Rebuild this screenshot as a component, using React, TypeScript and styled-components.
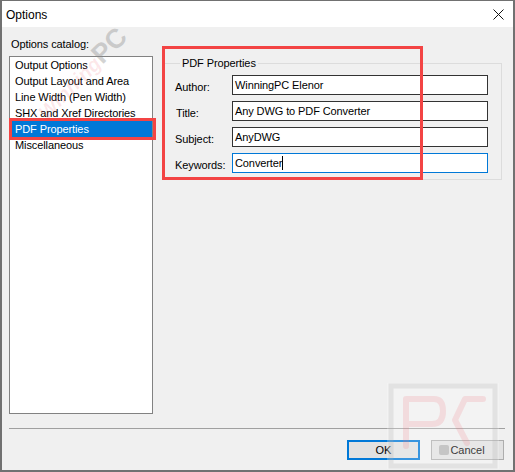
import React from "react";
import styled, { createGlobalStyle } from "styled-components";

const GlobalStyle = createGlobalStyle`
  html, body {
    margin: 0;
    padding: 0;
    background: #f0f0f0;
  }
  body {
    font-family: "Liberation Sans", Arial, sans-serif;
    font-size: 11px;
    letter-spacing: -0.1px;
    color: #000;
  }
`;

const Window = styled.div`
  position: relative;
  width: 515px;
  height: 472px;
  box-sizing: border-box;
  border: 2px solid #717171;
  border-top-width: 1px;
  display: flex;
  flex-direction: column;
  overflow: hidden;
  background: #f0f0f0;
`;

const TitleBar = styled.div`
  height: 26px;
  flex: none;
  background: #fff;
  display: flex;
  align-items: center;
  justify-content: space-between;
  padding: 0 9px 0 4px;
`;

const Title = styled.span`
  font-size: 12px;
  line-height: 16px;
  letter-spacing: 0;
  margin-top: 1px;
`;

const CloseIcon = () => (
  <svg width="11" height="11" viewBox="0 0 11 11">
    <path d="M0.5 0.5 L10.5 10.5 M10.5 0.5 L0.5 10.5" stroke="#111" strokeWidth="1" />
  </svg>
);

const Body = styled.div`
  flex: 1;
  display: flex;
  flex-direction: column;
  padding: 11px 8px 10px 7px;
  min-height: 0;
`;

const Main = styled.div`
  flex: 1;
  display: flex;
  min-height: 0;
`;

const Catalog = styled.div`
  width: 144px;
  display: flex;
  flex-direction: column;
`;

const CatalogLabel = styled.div`
  line-height: 13px;
  padding-left: 2px;
  margin-bottom: 5px;
`;

const List = styled.ul`
  flex: 1;
  margin: 0;
  padding: 0;
  list-style: none;
  background: #fff;
  border: 1px solid #828282;
`;

const Item = styled.li<{ $selected?: boolean }>`
  position: relative;
  height: 16px;
  line-height: 16px;
  padding-left: 5px;
  white-space: nowrap;
  background: ${(p) => (p.$selected ? "#0078d7" : "transparent")};
  color: ${(p) => (p.$selected ? "#fff" : "#000")};
`;

/* red markup frames drawn over the dialog */
const Marker = styled.div<{ $inset: string }>`
  position: absolute;
  inset: ${(p) => p.$inset};
  border: 3px solid #f34444;
  pointer-events: none;
`;

const Properties = styled.div`
  flex: 1;
  margin-left: 11px;
  margin-right: 3px;
  padding-top: 19px;
`;

const GroupWrap = styled.div`
  position: relative;
`;

const Group = styled.fieldset`
  margin: 0;
  padding: 5px 13px 6px 10px;
  border: 1px solid #dcdcdc;
  min-inline-size: 0;
  display: flex;
  flex-direction: column;
  gap: 6px;
`;

const Legend = styled.legend`
  margin-left: 5px;
  padding: 0 2px;
  line-height: 13px;
`;

const Row = styled.div`
  display: flex;
  align-items: center;
`;

const FieldLabel = styled.label<{ $shift?: number }>`
  width: 57px;
  flex: none;
  padding-top: 4px;
  padding-left: ${(p) => p.$shift ?? 0}px;
  box-sizing: border-box;
`;

const Field = styled.div<{ $focused?: boolean }>`
  flex: 1;
  height: 20px;
  box-sizing: border-box;
  border: 1px solid ${(p) => (p.$focused ? "#0078d7" : "#333")};
  background: #fff;
  padding-left: 2px;
  line-height: 18px;
  white-space: nowrap;
  display: flex;
  align-items: center;
`;

const Caret = styled.span`
  display: inline-block;
  width: 1px;
  height: 14px;
  background: #000;
`;

const Separator = styled.div`
  height: 1px;
  background: #a0a0a0;
  margin: 14px 0 11px 0;
  flex: none;
`;

const Buttons = styled.div`
  display: flex;
  justify-content: flex-end;
  gap: 11px;
  padding-right: 1px;
  flex: none;
`;

const Button = styled.button<{ $default?: boolean }>`
  width: 73px;
  height: 20px;
  box-sizing: border-box;
  font: inherit;
  font-size: 11px;
  color: #000;
  background: #e1e1e1;
  border: ${(p) => (p.$default ? "2px solid #0078d7" : "1px solid #adadad")};
  padding: 0;
  line-height: 16px;
`;

/* faint site watermarks layered over the dialog */
const CornerMark = styled.svg`
  position: absolute;
  left: 385px;
  top: 382px;
  pointer-events: none;
`;

const DiagonalMark = styled.div`
  position: absolute;
  left: 51px;
  top: 95px;
  transform: rotate(-45deg);
  transform-origin: 0 100%;
  font-family: "Liberation Sans", Arial, sans-serif;
  font-weight: bold;
  line-height: 26px;
  letter-spacing: 0;
  white-space: nowrap;
  pointer-events: none;
`;

const MarkRed = styled.span`
  font-size: 20px;
  color: rgba(235, 70, 80, 0.12);
  font-style: italic;
`;

const MarkGray = styled.span`
  font-size: 27px;
  color: rgba(140, 140, 140, 0.38);
`;

const catalog = [
  "Output Options",
  "Output Layout and Area",
  "Line Width (Pen Width)",
  "SHX and Xref Directories",
  "PDF Properties",
  "Miscellaneous",
];

const fields = [
  { label: "Author:", value: "WinningPC Elenor", shift: 0 },
  { label: "Title:", value: "Any DWG to PDF Converter", shift: 1 },
  { label: "Subject:", value: "AnyDWG", shift: 0 },
  { label: "Keywords:", value: "Converter", shift: 0, focused: true },
];

export default function App() {
  return (
    <>
      <GlobalStyle />
      <Window>
        <TitleBar>
          <Title>Options</Title>
          <CloseIcon />
        </TitleBar>
        <Body>
          <Main>
            <Catalog>
              <CatalogLabel>Options catalog:</CatalogLabel>
              <List>
                {catalog.map((name) => (
                  <Item key={name} $selected={name === "PDF Properties"}>
                    {name}
                    {name === "PDF Properties" && <Marker $inset="-3px -4px -3px -1px" />}
                  </Item>
                ))}
              </List>
            </Catalog>
            <Properties>
              <GroupWrap>
                <Group>
                  <Legend>PDF Properties</Legend>
                  {fields.map((f) => (
                    <Row key={f.label}>
                      <FieldLabel $shift={f.shift}>{f.label}</FieldLabel>
                      <Field $focused={f.focused}>
                        {f.value}
                        {f.focused && <Caret />}
                      </Field>
                    </Row>
                  ))}
                </Group>
                <Marker $inset="-11px 79px 0px -2px" />
              </GroupWrap>
            </Properties>
          </Main>
          <Separator />
          <Buttons>
            <Button $default>OK</Button>
            <Button>Cancel</Button>
          </Buttons>
        </Body>

        <DiagonalMark>
          <MarkRed>Winning</MarkRed>
          <MarkGray>PC</MarkGray>
        </DiagonalMark>

        <CornerMark width="114" height="90" viewBox="0 0 114 90">
          <rect x="0" y="0" width="112" height="86" fill="rgba(255,255,255,0.22)" />
          <rect x="4" y="3" width="104" height="80" fill="none" stroke="rgba(170,170,170,0.22)" strokeWidth="5" />
          <path
            d="M19 63 V16 H47 Q56 16 56 28 Q56 41 45 41 H20"
            fill="none"
            stroke="rgba(240,110,120,0.18)"
            strokeWidth="6"
            strokeLinejoin="round"
            strokeLinecap="round"
          />
          <path
            d="M96 16 H78 L68 37 L80 60"
            fill="none"
            stroke="rgba(240,110,120,0.18)"
            strokeWidth="6"
            strokeLinejoin="round"
            strokeLinecap="round"
          />
          <rect x="52" y="62" width="10" height="10" rx="2" fill="rgba(170,170,170,0.55)" />
        </CornerMark>
      </Window>
    </>
  );
}
